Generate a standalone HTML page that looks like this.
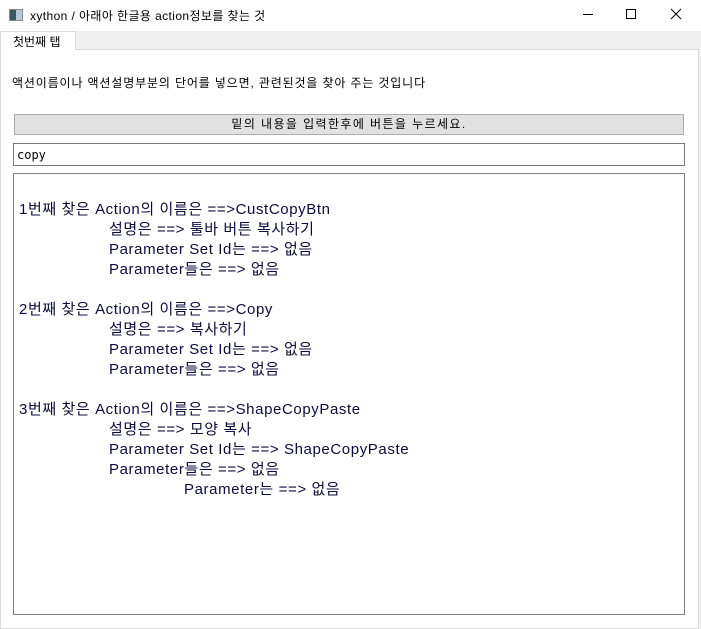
<!DOCTYPE html>
<html><head><meta charset="utf-8"><style>
*{margin:0;padding:0;box-sizing:border-box}
body{width:701px;height:629px;background:#f0f0f0;font-family:"Liberation Sans","Noto Sans CJK KR",sans-serif;position:relative;overflow:hidden}
.abs{position:absolute}
#title{left:0;top:0;width:701px;height:31px;background:#fff}
#title .t{left:30px;top:7px;font-size:12px;color:#000;letter-spacing:0.4px}
.icon{left:9px;top:9px;width:14px;height:12px;border:1px solid #888;background:linear-gradient(90deg,#3a5a60 0 50%,#b8c8d8 50%)}
#panel{left:0;top:49px;width:699px;height:580px;background:#fff;border:1px solid #d9d9d9}
#tab{left:0;top:31px;width:76px;height:19px;background:#fff;border:1px solid #d9d9d9;border-bottom:none;font-size:12px;padding:1px 0 0 12px}
#lbl{left:12px;top:74px;font-size:12px;letter-spacing:0.85px}
#btn{left:14px;top:114px;width:670px;height:21px;background:#e1e1e1;border:1px solid #adadad;font-size:12px;text-align:center;line-height:19px;letter-spacing:1.4px}
#inp{left:13px;top:143px;width:672px;height:23px;border:1px solid #7a7a7a;background:#fff;font-size:12px;padding:4px 3px;font-family:"DejaVu Sans Mono","Liberation Mono",monospace}
#box{left:13px;top:173px;width:672px;height:442px;border:1px solid #828282;background:#fff}
.ln{position:absolute;font-size:15px;letter-spacing:0.6px;color:#0c0c3c;white-space:pre;line-height:20px}
</style></head><body>
<div id="title" class="abs"><div class="abs icon"></div><div class="abs t">xython / 아래아 한글용 action정보를 찾는 것</div>
<div class="abs" style="left:583px;top:14px;width:10px;height:1px;background:#000"></div>
<div class="abs" style="left:626px;top:9px;width:10px;height:10px;border:1px solid #000"></div>
<svg class="abs" style="left:670px;top:8px" width="12" height="12"><path d="M1 1L11 11M11 1L1 11" stroke="#000" stroke-width="1"/></svg>
</div>
<div id="panel" class="abs"></div>
<div id="tab" class="abs">첫번째 탭</div>
<div id="lbl" class="abs">액션이름이나 액션설명부분의 단어를 넣으면, 관련된것을 찾아 주는 것입니다</div>
<div id="btn" class="abs">밑의 내용을 입력한후에 버튼을 누르세요.</div>
<div id="inp" class="abs">copy</div>
<div id="box" class="abs">
<div class="ln" style="left:5px;top:26px">1번째 찾은 Action의 이름은 ==&gt;CustCopyBtn</div>
<div class="ln" style="left:95px;top:46px">설명은 ==&gt; 툴바 버튼 복사하기</div>
<div class="ln" style="left:95px;top:66px">Parameter Set Id는 ==&gt; 없음</div>
<div class="ln" style="left:95px;top:86px">Parameter들은 ==&gt; 없음</div>
<div class="ln" style="left:5px;top:126px">2번째 찾은 Action의 이름은 ==&gt;Copy</div>
<div class="ln" style="left:95px;top:146px">설명은 ==&gt; 복사하기</div>
<div class="ln" style="left:95px;top:166px">Parameter Set Id는 ==&gt; 없음</div>
<div class="ln" style="left:95px;top:186px">Parameter들은 ==&gt; 없음</div>
<div class="ln" style="left:5px;top:226px">3번째 찾은 Action의 이름은 ==&gt;ShapeCopyPaste</div>
<div class="ln" style="left:95px;top:246px">설명은 ==&gt; 모양 복사</div>
<div class="ln" style="left:95px;top:266px">Parameter Set Id는 ==&gt; ShapeCopyPaste</div>
<div class="ln" style="left:95px;top:286px">Parameter들은 ==&gt; 없음</div>
<div class="ln" style="left:170px;top:306px">Parameter는 ==&gt; 없음</div>
</div>
</body></html>
